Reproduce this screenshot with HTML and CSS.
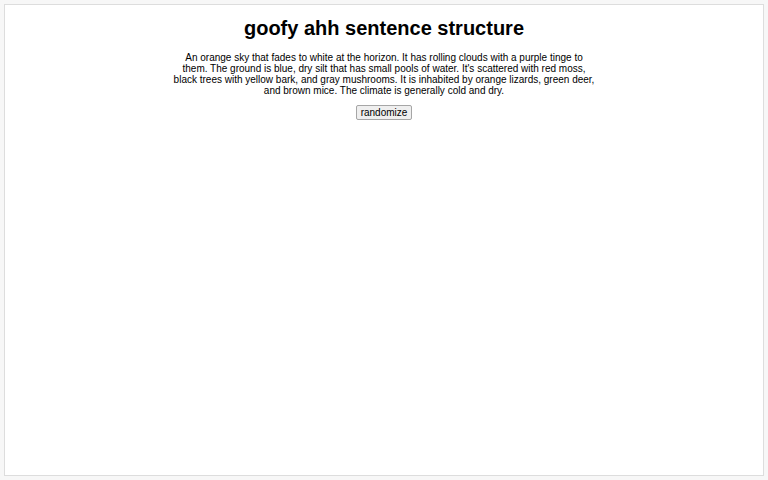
FILE: index.html
```html
<!DOCTYPE html>
<html lang="en">
<head>
<meta charset="utf-8">
<title>goofy ahh sentence structure</title>
<link rel="stylesheet" href="styles.css">
</head>
<body>
<main class="page">
  <h1 class="title">goofy ahh sentence structure</h1>
  <p class="output">An orange sky that fades to white at the horizon. It has rolling clouds with a purple tinge to them. The ground is blue, dry silt that has small pools of water. It's scattered with red moss, black trees with yellow bark, and gray mushrooms. It is inhabited by orange lizards, green deer, and brown mice. The climate is generally cold and dry.</p>
  <button class="randomize" type="button">randomize</button>
</main>
</body>
</html>
```
FILE: styles.css
```css
* {
  box-sizing: border-box;
}

body {
  display: flex;
  min-height: 100vh;
  margin: 0;
  padding: 4px;
  background: #f7f7f7;
  font-family: "Liberation Sans", Arial, sans-serif;
  color: #000;
}

.page {
  flex: 1;
  padding: 12px;
  border: 1px solid #ddd;
  background: #fff;
  text-align: center;
}

.title {
  margin: 0 0 13px;
  font-size: 20px;
  line-height: 22px;
}

.output {
  max-width: 424px;
  margin: 0 auto 9px;
  font-size: 10px;
  line-height: 11px;
}

.randomize {
  display: block;
  margin: 0 auto;
  padding: 1px 4px;
  border: 1px solid #a6a6a6;
  border-radius: 2px;
  background: #efefef;
  color: #000;
  font-family: inherit;
  font-size: 10px;
  line-height: 11px;
}
```
